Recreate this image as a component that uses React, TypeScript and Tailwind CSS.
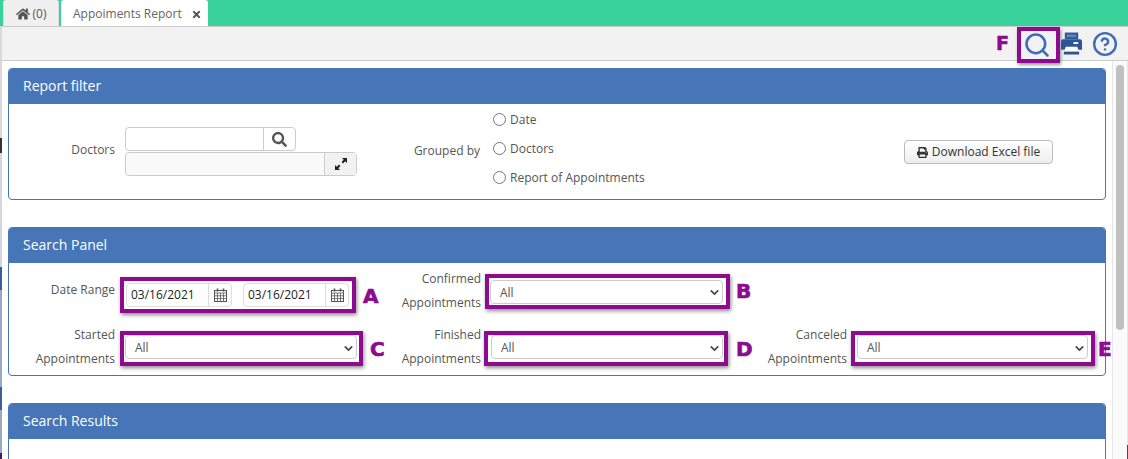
import { FaHome, FaPrint, FaSearch, FaTimes } from "react-icons/fa";
import { ChevronDown, CircleHelp, Search } from "lucide-react";

const font = "font-['Open_Sans','Noto_Sans',sans-serif]";

function CalendarIcon() {
  return (
    <svg width="13" height="14" viewBox="0 0 13 14" fill="none" stroke="#555" strokeWidth="1">
      <rect x="0.5" y="2.5" width="12" height="11" />
      <path d="M0.5 5h12M0.5 7.8h12M0.5 10.6h12M3.5 5v8.5M6.5 5v8.5M9.5 5v8.5" strokeWidth="0.8" />
      <path d="M3.5 0.5v3M9.5 0.5v3" strokeWidth="1.6" />
    </svg>
  );
}

function ExpandIcon() {
  return (
    <svg width="12" height="12" viewBox="0 0 11 11" fill="#222">
      <path d="M11 0v4.6L9.3 3 7.4 5 6 3.6 8 1.7 6.4 0zM0 11V6.4L1.7 8l1.9-2L5 7.4 3 9.3 4.6 11z" />
    </svg>
  );
}

function PrinterIcon() {
  return (
    <svg width="21" height="24" viewBox="0 0 22 24" className="mt-[1px] mr-[10px] ml-[1px]">
      <path d="M4 0h14v7H4z" fill="#2c5496" />
      <path d="M6 2h10v3H6z" fill="#5f82bb" />
      <path d="M2 7h18a2 2 0 0 1 2 2v9H0V9a2 2 0 0 1 2-2z" fill="#2c5496" />
      <path d="M13 10h5v2h-5z" fill="#fff" />
      <path d="M5 15h12l2 5H3z" fill="#fff" />
      <path d="M3 20h16v3H3z" fill="#2c5496" />
    </svg>
  );
}

function Letter({ children, className }: { children: string; className: string }) {
  return (
    <span
      className={`absolute font-['DejaVu_Sans',sans-serif] text-[20px] leading-none font-black text-[#8e0a8e] [-webkit-text-stroke:0.7px_#8e0a8e] ${className}`}
    >
      {children}
    </span>
  );
}

function Panel({ title, children }: { title: string; children?: React.ReactNode }) {
  return (
    <section className="rounded-[4px] border border-[#4676b7] bg-white">
      <h2 className="flex h-[35px] items-center rounded-t-[3px] bg-[#4676b7] pb-[2px] pl-[14px] text-[14px] font-normal text-white">
        {title}
      </h2>
      {children}
    </section>
  );
}

function SelectBox() {
  return (
    <div className="flex h-[24px] items-center justify-between rounded-[4px] border border-[#ccc] bg-white pt-[2px] pr-[1px] pl-[9px] text-[12px] text-[#555]">
      All
      <ChevronDown size={13} strokeWidth={3} className="text-[#444]" />
    </div>
  );
}

function Marked({ className, children }: { className: string; children: React.ReactNode }) {
  return (
    <div className={`border-[4px] border-[#8e0a8e] bg-white shadow-[1px_2px_4px_rgba(0,0,0,0.45)] ${className}`}>
      {children}
    </div>
  );
}

function Field({ top, children }: { top: string; children: React.ReactNode }) {
  return (
    <div className="flex h-[48px] items-center">
      <div className="w-[106px] text-right text-[12px] leading-[24px] text-[#555]">
        {top}
        <br />
        Appointments
      </div>
      {children}
    </div>
  );
}

function DateInput() {
  return (
    <div className="flex h-[24px] w-[106px] items-center rounded-[4px] border border-[#ddd] bg-white text-[12px] text-[#222]">
      <span className="flex-1 pl-[4px]">03/16/2021</span>
      <span className="flex h-full w-[23px] items-center justify-center border-l border-[#ddd]">
        <CalendarIcon />
      </span>
    </div>
  );
}

// sliver of the window behind the app, visible along the left edge
function EdgeStrip() {
  return (
    <div className="flex h-[433px] w-[2px] flex-col bg-[#d9d9d9]">
      <div className="h-[112px]" />
      <div className="h-[15px] bg-[#333]" />
      <div className="h-[114px] bg-[#d5d5de]" />
      <div className="h-[23px] bg-[#3d5f98]" />
      <div className="h-[97px] bg-[#9aa8c0]" />
      <div className="h-[23px] bg-[#3d5f98]" />
      <div className="h-[43px] bg-[#9aa8c0]" />
      <div className="h-[6px] bg-[#4a1a5a]" />
    </div>
  );
}

export default function App() {
  return (
    <div className={`relative h-[459px] w-[1128px] overflow-hidden bg-white ${font}`}>
      <div className="flex h-[26px] items-end gap-[2px] bg-[#3ad29b] pl-[3px]">
        <div className="flex h-[26px] w-[56px] items-center justify-center gap-[3px] rounded-t-[3px] border-x border-[#ddd] bg-[#f0f0f0] pt-[2px] text-[12px] text-[#555]">
          <FaHome size={14} />
          (0)
        </div>
        <div className="flex h-[26px] w-[147px] items-center rounded-t-[3px] bg-white pt-[2px] pl-[12px] text-[12px] text-[#666]">
          Appoiments Report
          <FaTimes size={11} className="ml-[9px] text-[#555]" />
        </div>
      </div>

      <div className="flex">
        <EdgeStrip />
        <div className="flex-1">
          <div className="flex h-[35px] items-center justify-end border-y border-[#ccc] bg-[#f2f2f2] pr-[10px]">
            <span className="mr-[8px] font-['DejaVu_Sans',sans-serif] text-[19px] font-black text-[#8e0a8e] [-webkit-text-stroke:0.6px_#8e0a8e]">
              F
            </span>
            <div className="mt-[2px] flex h-[36px] w-[43px] items-center justify-center border-[4px] border-[#8e0a8e] pr-[3px] shadow-[1px_2px_3px_rgba(0,0,0,0.4)]">
              <Search size={28} strokeWidth={2.2} className="shrink-0 text-[#3f6cb8]" />
            </div>
            <PrinterIcon />
            <CircleHelp size={26} strokeWidth={2.2} className="text-[#3f6cb8]" />
          </div>

          <div className="flex">
            <div className="ml-[6px] flex w-[1098px] flex-col gap-[27px] pt-[7px]">
              <Panel title="Report filter">
                <div className="flex h-[95px] text-[12px] text-[#555]">
                  <div className="flex w-[106px] items-center justify-end pb-[3px]">Doctors</div>
                  <div className="ml-[10px] flex w-[232px] flex-col gap-[1px] pt-[23px]">
                    <div className="flex h-[24px] w-[171px] rounded-[4px] border border-[#ccc] bg-white">
                      <span className="flex-1" />
                      <span className="flex w-[32px] items-center justify-center border-l border-[#ccc]">
                        <FaSearch size={15} className="text-[#555]" />
                      </span>
                    </div>
                    <div className="flex h-[24px] rounded-[4px] border border-[#ccc] bg-[#f9f9f9]">
                      <span className="flex-1" />
                      <span className="flex w-[32px] items-center justify-center border-l border-[#ccc] bg-[#f2f2f2]">
                        <ExpandIcon />
                      </span>
                    </div>
                  </div>
                  <div className="flex w-[123px] items-center justify-end pb-[2px]">Grouped by</div>
                  <div className="ml-[13px] flex w-[411px] flex-col justify-center gap-[9px] pb-[6px] text-[#555]">
                    {["Date", "Doctors", "Report of Appointments"].map((label) => (
                      <label key={label} className="flex h-[20px] items-center gap-[4px]">
                        <input type="radio" name="group" className="m-0 size-[13px]" />
                        {label}
                      </label>
                    ))}
                  </div>
                  <div className="flex items-center pt-[1px]">
                    <button className="flex h-[24px] w-[149px] items-center justify-center gap-[4px] rounded-[4px] border border-[#bbb] bg-gradient-to-b from-white to-[#eee] text-[12px] text-[#333]">
                      <FaPrint size={11} />
                      Download Excel file
                    </button>
                  </div>
                </div>
              </Panel>

              <Panel title="Search Panel">
                <div className="grid h-[112px] grid-cols-[366px_366px_364px] grid-rows-[48px_48px] content-start gap-y-[8px] pt-[4px]">
                  <div className="flex h-[48px] items-center">
                    <div className="w-[106px] pb-[2px] text-right text-[12px] text-[#555]">Date Range</div>
                    <Marked className="mt-[8px] ml-[5px] w-[236px] pt-[2px] pr-[2px] pb-[2px] pl-[2px]">
                      <div className="flex gap-[11px]">
                        <DateInput />
                        <DateInput />
                      </div>
                    </Marked>
                  </div>
                  <Field top="Confirmed">
                    <Marked className="ml-[4px] w-[245px] pt-[2px] pr-[3px] pb-[1px] pl-[1px]">
                      <SelectBox />
                    </Marked>
                  </Field>
                  <div />
                  <Field top="Started">
                    <Marked className="mt-[3px] ml-[5px] w-[243px] pr-[2px] pb-[3px] pl-[1px]">
                      <SelectBox />
                    </Marked>
                  </Field>
                  <Field top="Finished">
                    <Marked className="mt-[3px] ml-[3px] w-[244px] pr-[1px] pb-[3px] pl-[3px]">
                      <SelectBox />
                    </Marked>
                  </Field>
                  <Field top="Canceled">
                    <Marked className="mt-[3px] ml-[4px] w-[244px] pr-[3px] pb-[3px] pl-[2px]">
                      <SelectBox />
                    </Marked>
                  </Field>
                </div>
              </Panel>

              <Panel title="Search Results">
                <div className="h-[40px]" />
              </Panel>
            </div>

            <div className="ml-[6px] flex h-[398px] w-[16px] justify-center border-x border-[#e6e6e6] bg-[#fafafa] pt-[4px]">
              <div className="h-[265px] w-[8px] rounded-full bg-[#c1c1c1]" />
            </div>
          </div>
        </div>
      </div>

      <span className="absolute right-0 bottom-0 h-[14px] w-[1px] bg-[#a02050]" />
      <Letter className="top-[286px] left-[363px]">A</Letter>
      <Letter className="top-[281px] left-[736px]">B</Letter>
      <Letter className="top-[339px] left-[370px]">C</Letter>
      <Letter className="top-[339px] left-[736px]">D</Letter>
      <Letter className="top-[339px] left-[1098px]">E</Letter>
    </div>
  );
}
